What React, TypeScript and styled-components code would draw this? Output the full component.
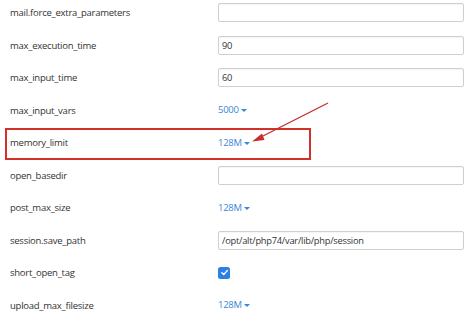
import React from "react";
import styled, { createGlobalStyle } from "styled-components";

const Global = createGlobalStyle`
  html, body { margin: 0; padding: 0; background: #fff; }
  body { font-family: "Open Sans", "Liberation Sans", sans-serif; overflow: hidden; }
`;

const Page = styled.div`
  position: relative;
  width: 474px;
  height: 312px;
  overflow: hidden;
`;

const List = styled.div`
  display: flex;
  flex-direction: column;
  margin-top: -3.5px;
`;

const Row = styled.div`
  position: relative;
  display: grid;
  grid-template-columns: 208px 246px;
  align-items: center;
  height: 32.5px;
  padding-left: 10px;
`;

const Label = styled.div`
  font-size: 9.5px;
  letter-spacing: -0.25px;
  color: #333;
  white-space: nowrap;
`;

const Cell = styled.div`
  display: flex;
  align-items: center;
`;

const TextInput = styled.div`
  box-sizing: border-box;
  flex: 1;
  height: 19px;
  border: 1px solid #cfcfcf;
  border-radius: 2px;
  padding: 0 3px;
  font-size: 9.3px;
  letter-spacing: -0.25px;
  line-height: 17px;
  color: #333;
  box-shadow: inset 0 1px 1px rgba(0,0,0,0.04);
`;

const Select = styled.div`
  display: inline-flex;
  align-items: center;
  gap: 2px;
  font-size: 9.5px;
  letter-spacing: -0.25px;
  line-height: 12px;
  color: #3a86d8;
`;

const Caret = styled.span`
  width: 0;
  height: 0;
  border-left: 3px solid transparent;
  border-right: 3px solid transparent;
  border-top: 3px solid #3a86d8;
  margin-top: 1px;
`;

const Check = styled.div`
  width: 12px;
  height: 12px;
  border-radius: 2.5px;
  background: #2d7fe6;
  display: flex;
  align-items: center;
  justify-content: center;
`;

const Highlight = styled.div`
  position: absolute;
  left: 5px;
  top: 1.5px;
  width: 306px;
  height: 32px;
  box-sizing: border-box;
  border: 2px solid #d3302c;
`;

const ArrowLayer = styled.svg`
  position: absolute;
  left: 0;
  top: 0;
  pointer-events: none;
`;

type Item =
  | { name: string; kind: "input"; value: string }
  | { name: string; kind: "select"; value: string; highlight?: boolean }
  | { name: string; kind: "check" };

const items: Item[] = [
  { name: "mail.force_extra_parameters", kind: "input", value: "" },
  { name: "max_execution_time", kind: "input", value: "90" },
  { name: "max_input_time", kind: "input", value: "60" },
  { name: "max_input_vars", kind: "select", value: "5000" },
  { name: "memory_limit", kind: "select", value: "128M", highlight: true },
  { name: "open_basedir", kind: "input", value: "" },
  { name: "post_max_size", kind: "select", value: "128M" },
  { name: "session.save_path", kind: "input", value: "/opt/alt/php74/var/lib/php/session" },
  { name: "short_open_tag", kind: "check" },
  { name: "upload_max_filesize", kind: "select", value: "128M" },
];

export default function App() {
  return (
    <>
      <Global />
      <Page>
        <List>
          {items.map((it) => (
            <Row key={it.name}>
              {it.kind === "select" && it.highlight && <Highlight />}
              <Label>{it.name}</Label>
              <Cell>
                {it.kind === "input" && <TextInput>{it.value}</TextInput>}
                {it.kind === "select" && (
                  <Select>
                    {it.value}
                    <Caret />
                  </Select>
                )}
                {it.kind === "check" && (
                  <Check>
                    <svg width="9" height="9" viewBox="0 0 10 10">
                      <path d="M2 5.2 L4.2 7.3 L8.2 2.8" fill="none" stroke="#fff" strokeWidth="1.5" strokeLinecap="round" strokeLinejoin="round" />
                    </svg>
                  </Check>
                )}
              </Cell>
            </Row>
          ))}
        </List>
        <ArrowLayer width="474" height="312" viewBox="0 0 474 312">
          <line x1="328" y1="103" x2="258" y2="138.5" stroke="#c7302c" strokeWidth="1.4" />
          <polygon points="252,141.5 262,133.5 264.5,140" fill="#c7302c" />
        </ArrowLayer>
      </Page>
    </>
  );
}
